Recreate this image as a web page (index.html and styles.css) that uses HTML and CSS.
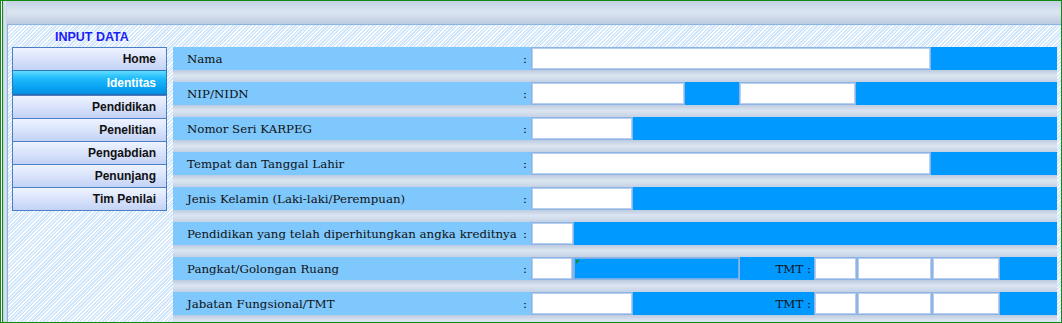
FILE: index.html
```html
<!DOCTYPE html>
<html lang="id">
<head>
    <meta charset="UTF-8">
    <title>Input Data - Identitas</title>
    <link rel="stylesheet" href="styles.css">
</head>
<body>
    <div class="edge"></div>
    <div class="main">
        <div class="header"></div>

        <div class="panel">
            <div class="title">INPUT DATA</div>

            <div class="content">
                <!-- Menu kiri -->
                <div class="menu">
                    <div class="menu-item">Home</div>
                    <div class="menu-item active">Identitas</div>
                    <div class="menu-item">Pendidikan</div>
                    <div class="menu-item">Penelitian</div>
                    <div class="menu-item">Pengabdian</div>
                    <div class="menu-item">Penunjang</div>
                    <div class="menu-item">Tim Penilai</div>
                </div>

                <!-- Form identitas -->
                <div class="form">
                    <div class="row">
                        <div class="label"><span>Nama</span><span>:</span></div>
                        <div class="cell"><input class="w400" type="text"></div>
                    </div>
                    <div class="sep"></div>

                    <div class="row">
                        <div class="label"><span>NIP/NIDN</span><span>:</span></div>
                        <div class="cell">
                            <input class="w154" type="text">
                            <span class="gap54"></span>
                            <input class="w117" type="text">
                        </div>
                    </div>
                    <div class="sep"></div>

                    <div class="row">
                        <div class="label"><span>Nomor Seri KARPEG</span><span>:</span></div>
                        <div class="cell"><input class="w102" type="text"></div>
                    </div>
                    <div class="sep"></div>

                    <div class="row">
                        <div class="label"><span>Tempat dan Tanggal Lahir</span><span>:</span></div>
                        <div class="cell"><input class="w400" type="text"></div>
                    </div>
                    <div class="sep"></div>

                    <div class="row">
                        <div class="label"><span>Jenis Kelamin (Laki-laki/Perempuan)</span><span>:</span></div>
                        <div class="cell"><input class="w102" type="text"></div>
                    </div>
                    <div class="sep"></div>

                    <div class="row">
                        <div class="label"><span>Pendidikan yang telah diperhitungkan angka kreditnya</span><span>:</span></div>
                        <div class="cell"><input class="w43" type="text"></div>
                    </div>
                    <div class="sep"></div>

                    <div class="row">
                        <div class="label"><span>Pangkat/Golongan Ruang</span><span>:</span></div>
                        <div class="cell">
                            <input class="w42" type="text">
                            <span class="golongan"></span>
                            <span class="fill"></span>
                            <div class="tmt">
                                <span class="tmt-label">TMT :</span>
                                <input class="w43" type="text">
                                <input class="w75" type="text">
                                <input class="w68" type="text">
                            </div>
                        </div>
                    </div>
                    <div class="sep"></div>

                    <div class="row">
                        <div class="label"><span>Jabatan Fungsional/TMT</span><span>:</span></div>
                        <div class="cell">
                            <input class="w102" type="text">
                            <span class="fill"></span>
                            <div class="tmt">
                                <span class="tmt-label">TMT :</span>
                                <input class="w43" type="text">
                                <input class="w75" type="text">
                                <input class="w68" type="text">
                            </div>
                        </div>
                    </div>
                    <div class="sep"></div>
                </div>
            </div>
        </div>
    </div>
</body>
</html>
```

FILE: styles.css
```css
/* Halaman dasar */
html, body {
    margin: 0;
    padding: 0;
}

body {
    width: 1062px;
    height: 323px;
    box-sizing: border-box;
    border: 1px solid #128a12;
    display: flex;
    overflow: hidden;
    background: #fff;
}

/* Garis tepi kiri */
.edge {
    width: 4px;
    margin-left: 1px;
    border-left: 1px solid #128a12;
    background: linear-gradient(to right, #b9c9e1, #dde6f2, #c2d0e5);
}

.main {
    flex: 1;
    display: flex;
    flex-direction: column;
    min-height: 0;
}

/* Bar atas */
.header {
    flex-shrink: 0;
    height: 23px;
    background: linear-gradient(to bottom, #c3d1e4, #dae4f0 45%, #d6e0ee 60%, #bccbe1);
}

/* Panel bergaris */
.panel {
    flex: 1;
    min-height: 0;
    overflow: hidden;
    border-top: 1px solid #8cb4e0;
    border-left: 1px solid #8cb4e0;
    background: repeating-linear-gradient(135deg, #d2e7fc 0 1.6px, #ffffff 1.6px 2.6px);
}

.title {
    height: 22px;
    line-height: 24px;
    padding-left: 47px;
    font-family: "Liberation Sans", Arial, sans-serif;
    font-weight: bold;
    font-size: 12.5px;
    color: #1d1df8;
}

.content {
    display: flex;
    padding-left: 4px;
}

/* Menu */
.menu {
    width: 155px;
    margin-right: 6px;
}

.menu-item {
    box-sizing: border-box;
    height: 24px;
    margin-top: -1px;
    padding-right: 10px;
    border: 1px solid #4b7ec3;
    background: linear-gradient(to bottom, #eef3ff, #d9e3fb 50%, #c3d2f5);
    font-family: "Liberation Sans", Arial, sans-serif;
    font-weight: bold;
    font-size: 12px;
    line-height: 23px;
    text-align: right;
    color: #111;
}

.menu-item:first-child {
    margin-top: 0;
}

.menu-item.active {
    height: 26px;
    line-height: 24px;
    color: #fff;
    border-color: #2a78b8;
    border-bottom: 2px solid #2a6aa8;
    background: linear-gradient(to bottom, #62dcff, #22bcfb 30%, #0aa3f4 70%, #0690e2);
}

/* Form */
.form {
    width: 884px;
}

.row {
    display: flex;
    height: 23px;
}

.sep {
    height: 12px;
    background: linear-gradient(to bottom, #bccbe0, #dbe4f0 45%, #d7e1ee 60%, #c3d1e5);
}

.label {
    width: 358px;
    box-sizing: border-box;
    padding: 1px 4px 0 14px;
    display: flex;
    justify-content: space-between;
    align-items: center;
    background: #7fc8fd;
    font-family: "DejaVu Serif", "Liberation Serif", serif;
    font-size: 11.8px;
    color: #111;
}

.cell {
    flex: 1;
    display: flex;
    background: #0099ff;
}

.cell input {
    box-sizing: border-box;
    height: 23px;
    margin: 0;
    padding: 0 3px;
    border: 1px solid #8fb3e2;
    box-shadow: inset 0 0 0 1px #b7cfee;
    background: #fff;
    outline: none;
}

.w400 { width: 400px; }
.w154 { width: 154px; }
.w117 { width: 117px; }
.w102 { width: 102px; }
.w75 { width: 75px; }
.w68 { width: 68px; }
.w43 { width: 43px; }
.w42 { width: 42px; }

.gap54 {
    width: 54px;
}

/* Kotak golongan (gambar tidak tampil) */
.golongan {
    position: relative;
    box-sizing: border-box;
    width: 167px;
    border: 1px solid #8fb3e2;
    box-shadow: inset 0 0 0 1px #6fb0ea;
}

.golongan::before {
    content: "";
    position: absolute;
    top: 2px;
    left: 2px;
    border-top: 4px solid #1a8a2a;
    border-right: 4px solid transparent;
}

.fill {
    flex: 1;
}

.tmt {
    display: flex;
    align-items: center;
    margin-right: 57px;
}

.tmt-label {
    padding-right: 3px;
    font-family: "DejaVu Serif", "Liberation Serif", serif;
    font-size: 11.8px;
    color: #111;
}
```
